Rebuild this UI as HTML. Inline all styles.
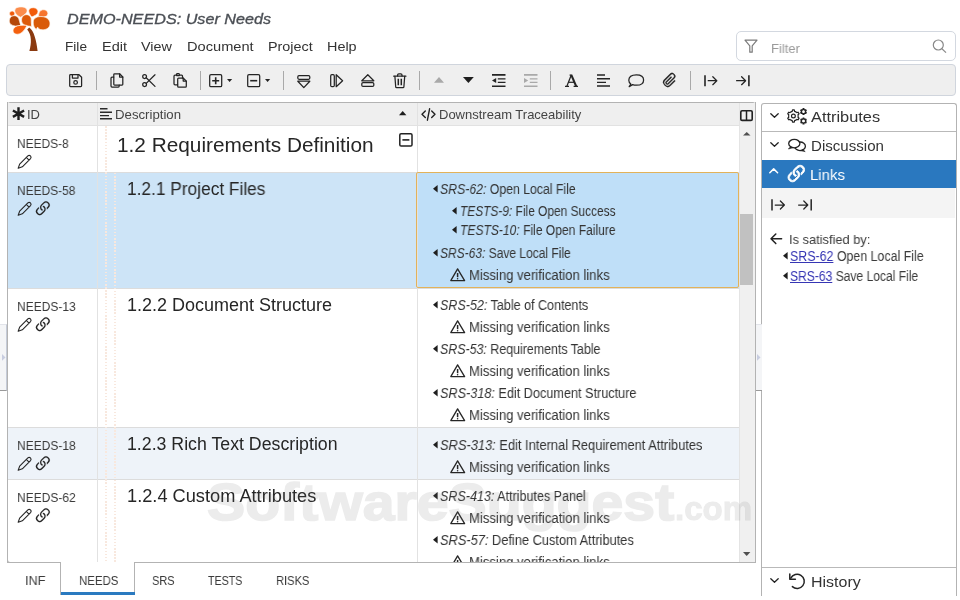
<!DOCTYPE html>
<html><head><meta charset="utf-8">
<style>
*{box-sizing:border-box;margin:0;padding:0}
html,body{width:960px;height:600px;overflow:hidden;background:#fff;font-family:"Liberation Sans",sans-serif;color:#333}
.a{position:absolute;white-space:nowrap}
[id^=t]{will-change:transform}
svg{position:absolute;overflow:visible}
i{font-style:italic}
</style></head><body>
<svg style="left:0px;top:0px" width="60" height="56" viewBox="0 0 60 56" >
 <path d="M29.2 27.5 C34 30.5 36.5 41 37.6 51 L29.4 51 C31.6 43 31.8 35 27.2 29.5 Z" fill="#8a3a10"/>
 <g stroke="#fff6ee" stroke-width="0.7">
 <circle cx="12.1" cy="13.6" r="2.6" fill="#f05a0a"/>
 <path d="M20.6 17.2 C17 15.5 14.6 13.2 14.8 10.4 C15 7.6 18 6.8 21.2 6.9 C24.6 7 27.2 8.2 27.1 10.8 C27 13.6 23.6 15.4 20.6 17.2 Z" fill="#fb8c4c"/>
 <path d="M31.8 17 C29.5 14.5 28.6 12.2 28.8 10.4 C29 8.4 31 7.6 33.4 7.7 C36.2 7.8 38.1 9.4 38 11.8 C37.9 14.4 34.6 15.8 31.8 17 Z" fill="#f25a08"/>
 <path d="M38.6 16.6 C38.4 13.2 39.6 10.2 42.8 9.7 C46 9.3 48 11.4 47.9 13.6 C47.8 16 45.4 17 43 16.9 C41.4 16.8 40 16.6 38.6 16.6 Z" fill="#f6752e"/>
 <path d="M20.8 25.6 C17.5 26.4 13.2 26.4 10.8 24.4 C8.6 22.4 9 18.2 11.4 16.6 C13.8 15 17.2 15.6 18.6 18.2 C19.6 20.2 19.8 23.2 20.8 25.6 Z" fill="#b54708"/>
 <path d="M31.6 26.4 C28 26.2 24 25.6 22.4 23.2 C20.8 20.8 21.4 16.4 24.6 15 C27.8 13.8 30.8 15.6 31.2 18.8 C31.5 21.2 31 23.8 31.6 26.4 Z" fill="#dd5a0a"/>
 <path d="M33.2 22 C33.4 17.6 37.6 16.3 42 16.6 C47 17 50.2 20 50 24 C49.8 28 46 30 42.2 29.8 C39.8 29.7 38.2 28.4 37.6 27.2 L36.2 29.4 C34 27.6 33.1 25 33.2 22 Z" fill="#d95a08"/>
 <path d="M27 25.4 C25 29.5 22 33.8 17.8 34.2 C14.2 34.5 12.6 32 13.2 29.6 C13.8 27 16.8 25.6 20.2 25.4 C22.6 25.3 24.8 25.3 27 25.4 Z" fill="#f4600e"/>
 </g>
</svg>
<div id="t0" class="a" style="left:67.00px;top:10px;font-size:15.5px;line-height:17px;color:#4b4f55;transform:scaleX(1.0440);transform-origin:0 0;font-style:italic;-webkit-text-stroke:0.35px #4b4f55">DEMO-NEEDS: User Needs</div>
<div id="t1" class="a" style="left:65.25px;top:39px;font-size:13px;line-height:15px;color:#333;transform:scaleX(1.0482);transform-origin:0 0;">File</div>
<div id="t2" class="a" style="left:101.50px;top:39px;font-size:13px;line-height:15px;color:#333;transform:scaleX(1.1134);transform-origin:0 0;">Edit</div>
<div id="t3" class="a" style="left:140.90px;top:39px;font-size:13px;line-height:15px;color:#333;transform:scaleX(1.1031);transform-origin:0 0;">View</div>
<div id="t4" class="a" style="left:186.70px;top:39px;font-size:13px;line-height:15px;color:#333;transform:scaleX(1.1251);transform-origin:0 0;">Document</div>
<div id="t5" class="a" style="left:268.00px;top:39px;font-size:13px;line-height:15px;color:#333;transform:scaleX(1.1055);transform-origin:0 0;">Project</div>
<div id="t6" class="a" style="left:327.30px;top:39px;font-size:13px;line-height:15px;color:#333;transform:scaleX(1.1081);transform-origin:0 0;">Help</div>
<div class="a" style="left:736px;top:31px;width:220px;height:30px;border:1px solid #d3d8e0;border-radius:5px;background:#fff"></div>
<svg style="left:744px;top:38.5px" width="14" height="14.5" viewBox="0 0 14 14.5" ><path d="M1 1.2 H13 L8.2 6.8 V13.2 H5.8 V6.8 Z" fill="none" stroke="#7a7a7a" stroke-width="1.2" stroke-linejoin="round"/></svg>
<div id="t7" class="a" style="left:771.00px;top:41px;font-size:13.5px;line-height:15px;color:#9a9a9a;transform:scaleX(0.9634);transform-origin:0 0;">Filter</div>
<svg style="left:932px;top:38.5px" width="16" height="16" viewBox="0 0 16 16" ><circle cx="6.3" cy="6" r="5" fill="none" stroke="#888" stroke-width="1.2"/><path d="M9.8 9.6 L14 13.6" stroke="#888" stroke-width="1.3"/></svg>
<div class="a" style="left:6px;top:64px;width:950px;height:32px;border:1px solid #d0d5dd;border-radius:4px;background:#efefef"></div>
<div class="a" style="left:96.0px;top:71px;width:1px;height:19px;background:#a9a9a9"></div>
<div class="a" style="left:199.6px;top:71px;width:1px;height:19px;background:#a9a9a9"></div>
<div class="a" style="left:283.0px;top:71px;width:1px;height:19px;background:#a9a9a9"></div>
<div class="a" style="left:419.0px;top:71px;width:1px;height:19px;background:#a9a9a9"></div>
<div class="a" style="left:550.1px;top:71px;width:1px;height:19px;background:#a9a9a9"></div>
<div class="a" style="left:690.1px;top:71px;width:1px;height:19px;background:#a9a9a9"></div>
<svg style="left:69px;top:74px" width="14" height="13.5" viewBox="0 0 14 13.5" ><path d="M1.6 0.7 H10 L12.6 3.3 V11.8 Q12.6 12.6 11.8 12.6 H1.6 Q0.7 12.6 0.7 11.8 V1.5 Q0.7 0.7 1.6 0.7 Z" fill="none" stroke="#242424" stroke-width="1.25" stroke-linejoin="round" stroke-linecap="round"/><path d="M3.4 0.8 V4 H9 V0.8" fill="none" stroke="#242424" stroke-width="1.25" stroke-linejoin="round" stroke-linecap="round"/><circle cx="6.6" cy="8.4" r="1.8" fill="none" stroke="#242424" stroke-width="1.25" stroke-linejoin="round" stroke-linecap="round"/></svg>
<svg style="left:109.5px;top:73px" width="14" height="15" viewBox="0 0 14 15" ><path d="M3.6 4.2 H2 Q1 4.2 1 5.2 V13 Q1 14 2 14 H8.2 Q9.2 14 9.2 13 V12.2" fill="none" stroke="#242424" stroke-width="1.25" stroke-linejoin="round" stroke-linecap="round"/><path d="M4.6 0.8 H9.6 L12.8 4 V11.2 Q12.8 12 12 12 H4.6 Q3.8 12 3.8 11.2 V1.6 Q3.8 0.8 4.6 0.8 Z" fill="none" stroke="#242424" stroke-width="1.25" stroke-linejoin="round" stroke-linecap="round"/><path d="M9.6 0.8 V4 H12.8" fill="none" stroke="#242424" stroke-width="1.25" stroke-linejoin="round" stroke-linecap="round"/></svg>
<svg style="left:141.5px;top:74px" width="14" height="13.5" viewBox="0 0 14 13.5" ><circle cx="2.6" cy="2.6" r="1.9" fill="none" stroke="#242424" stroke-width="1.25" stroke-linejoin="round" stroke-linecap="round"/><circle cx="2.6" cy="10.6" r="1.9" fill="none" stroke="#242424" stroke-width="1.25" stroke-linejoin="round" stroke-linecap="round"/><path d="M4.2 3.8 L13 12.4 M4.2 9.4 L13 0.8" fill="none" stroke="#242424" stroke-width="1.25" stroke-linejoin="round" stroke-linecap="round"/></svg>
<svg style="left:173px;top:73px" width="14.5" height="15" viewBox="0 0 14.5 15" ><path d="M6.5 2.2 H8.6 Q9.5 2.2 9.5 3.1 V5" fill="none" stroke="#242424" stroke-width="1.25" stroke-linejoin="round" stroke-linecap="round"/><path d="M4.2 2.2 H2 Q1 2.2 1 3.2 V10.8 Q1 11.8 2 11.8 H4.6" fill="none" stroke="#242424" stroke-width="1.25" stroke-linejoin="round" stroke-linecap="round"/><path d="M3.6 2.6 V1.4 Q3.6 0.7 4.3 0.7 H5.6 Q6.3 0.7 6.3 1.4 V2.6 Z" fill="none" stroke="#242424" stroke-width="1.25" stroke-linejoin="round" stroke-linecap="round"/><path d="M5.6 5 H10.2 L13.3 8.1 V13.3 Q13.3 14.2 12.4 14.2 H5.6 Q4.7 14.2 4.7 13.3 V5.9 Q4.7 5 5.6 5 Z" fill="none" stroke="#242424" stroke-width="1.25" stroke-linejoin="round" stroke-linecap="round"/><path d="M10.2 5 V8.1 H13.3" fill="none" stroke="#242424" stroke-width="1.25" stroke-linejoin="round" stroke-linecap="round"/></svg>
<svg style="left:209px;top:74px" width="13.5" height="13.5" viewBox="0 0 13.5 13.5" ><rect x="0.7" y="0.7" width="12" height="12" rx="1.3" fill="none" stroke="#242424" stroke-width="1.25" stroke-linejoin="round" stroke-linecap="round" stroke-width="1.4"/><path d="M6.7 3.2 V10.2 M3.2 6.7 H10.2" fill="none" stroke="#242424" stroke-width="1.6"/></svg>
<svg style="left:227.3px;top:78.8px" width="5.5" height="3.2" viewBox="0 0 5.5 3.2" ><path d="M0 0 H5.2 L2.6 3 Z" fill="#242424"/></svg>
<svg style="left:246.8px;top:74px" width="13.5" height="13.5" viewBox="0 0 13.5 13.5" ><rect x="0.7" y="0.7" width="12" height="12" rx="1.3" fill="none" stroke="#242424" stroke-width="1.25" stroke-linejoin="round" stroke-linecap="round" stroke-width="1.4"/><path d="M3.2 6.7 H10.2" fill="none" stroke="#242424" stroke-width="1.6"/></svg>
<svg style="left:264.5px;top:78.8px" width="5.5" height="3.2" viewBox="0 0 5.5 3.2" ><path d="M0 0 H5.2 L2.6 3 Z" fill="#242424"/></svg>
<svg style="left:296.8px;top:74.6px" width="13.8" height="13.5" viewBox="0 0 13.8 13.5" ><rect x="0.8" y="0.7" width="12" height="3.6" rx="1.2" fill="none" stroke="#242424" stroke-width="1.25" stroke-linejoin="round" stroke-linecap="round"/><path d="M0.8 6.2 H12.8 L6.8 12.6 Z" fill="none" stroke="#242424" stroke-width="1.25" stroke-linejoin="round" stroke-linecap="round"/></svg>
<svg style="left:329.8px;top:74.2px" width="13.5" height="13.5" viewBox="0 0 13.5 13.5" ><rect x="0.7" y="0.7" width="3.6" height="12" rx="1.2" fill="none" stroke="#242424" stroke-width="1.25" stroke-linejoin="round" stroke-linecap="round"/><path d="M6.2 0.7 V12.7 L12.6 6.7 Z" fill="none" stroke="#242424" stroke-width="1.25" stroke-linejoin="round" stroke-linecap="round"/></svg>
<svg style="left:360.6px;top:74px" width="14" height="13.5" viewBox="0 0 14 13.5" ><path d="M0.8 6.8 H12.8 L6.8 0.7 Z" fill="none" stroke="#242424" stroke-width="1.25" stroke-linejoin="round" stroke-linecap="round"/><rect x="0.8" y="8.6" width="12" height="3.8" rx="1.2" fill="none" stroke="#242424" stroke-width="1.25" stroke-linejoin="round" stroke-linecap="round"/></svg>
<svg style="left:392.6px;top:72.6px" width="14" height="15.5" viewBox="0 0 14 15.5" ><path d="M0.7 3.2 H12.9" fill="none" stroke="#242424" stroke-width="1.25" stroke-linejoin="round" stroke-linecap="round"/><path d="M4.6 3 V2 Q4.6 0.8 5.8 0.8 H7.8 Q9 0.8 9 2 V3" fill="none" stroke="#242424" stroke-width="1.25" stroke-linejoin="round" stroke-linecap="round" fill="#242424"/><path d="M1.9 3.4 L2.7 13.8 Q2.8 14.6 3.6 14.6 H10 Q10.8 14.6 10.9 13.8 L11.7 3.4" fill="none" stroke="#242424" stroke-width="1.25" stroke-linejoin="round" stroke-linecap="round"/><path d="M5.3 5.8 V12.2 M8.3 5.8 V12.2" fill="none" stroke="#242424" stroke-width="1.5"/></svg>
<svg style="left:433.5px;top:77px" width="10" height="5.8" viewBox="0 0 10 5.8" ><path d="M0 5.8 H10 L5 0 Z" fill="#a9a9a9"/></svg>
<svg style="left:462.7px;top:77.2px" width="10.8" height="6" viewBox="0 0 10.8 6" ><path d="M0 0 H10.8 L5.4 6 Z" fill="#1e1e1e"/></svg>
<svg style="left:492.2px;top:74px" width="13.5" height="13" viewBox="0 0 13.5 13" ><path d="M0 0.9 H13.5 M0 12.2 H13.5" fill="none" stroke="#242424" stroke-width="1.6"/><path d="M5.8 4.9 H13.5 M5.8 8.4 H13.5" fill="none" stroke="#242424" stroke-width="1.4"/><path d="M0 6.6 L4.2 4.1 V9.1 Z" fill="#242424"/></svg>
<svg style="left:524.4px;top:74px" width="13.5" height="13" viewBox="0 0 13.5 13" ><path d="M0 0.9 H13.5 M0 12.2 H13.5" fill="none" stroke="#a9a9a9" stroke-width="1.6"/><path d="M5.8 4.9 H13.5 M5.8 8.4 H13.5" fill="none" stroke="#a9a9a9" stroke-width="1.4"/><path d="M4.2 6.6 L0 4.1 V9.1 Z" fill="#a9a9a9"/></svg>
<svg style="left:565px;top:74px" width="13" height="13.2" viewBox="0 0 13 13.2" ><path d="M1.8 12.4 L6.3 0.9" fill="none" stroke="#242424" stroke-width="1.3"/><path d="M6.3 0.9 L11.2 12.4" fill="none" stroke="#242424" stroke-width="2.1"/><path d="M3.4 8.3 H9.4" fill="none" stroke="#242424" stroke-width="1.2"/><path d="M0 12.4 H4 M8.6 12.4 H13" fill="none" stroke="#242424" stroke-width="1.2"/><path d="M4.6 1.1 H6.8" stroke="#242424" stroke-width="1.3"/></svg>
<svg style="left:596.8px;top:74px" width="13" height="13" viewBox="0 0 13 13" ><path d="M0 1 H8 M0 4.7 H13 M0 8.4 H9 M0 12 H13" fill="none" stroke="#242424" stroke-width="1.4"/></svg>
<svg style="left:627.8px;top:74px" width="16.5" height="13.5" viewBox="0 0 16.5 13.5" ><path d="M2.8 10 Q0.8 8.4 0.8 6.2 Q0.8 0.8 8.4 0.8 Q15.6 0.8 15.6 6 Q15.6 11.2 8.4 11.2 Q6.2 11.2 4.6 10.6 L1.2 12.6 Z" fill="none" stroke="#242424" stroke-width="1.25" stroke-linejoin="round" stroke-linecap="round" stroke-width="1.3"/></svg>
<svg style="left:661.8px;top:72.2px" width="15.8" height="16.4" viewBox="0 0 16 16" ><g transform="rotate(45 8 8) translate(8 8) scale(1.28 1.0) translate(-8 -8)"><path d="M4.5 3a2.5 2.5 0 0 1 5 0v9a1.5 1.5 0 0 1-3 0V5a.5.5 0 0 1 1 0v7a.5.5 0 0 0 1 0V3a1.5 1.5 0 1 0-3 0v9a2.5 2.5 0 0 0 5 0V5a.5.5 0 0 1 1 0v7a3.5 3.5 0 1 1-7 0V3z" fill="#242424" stroke="#242424" stroke-width="0.25"/></g></svg>
<svg style="left:703.8px;top:75px" width="14" height="11.5" viewBox="0 0 14 11.5" ><path d="M1 0.3 V11.2" fill="none" stroke="#242424" stroke-width="1.6"/><path d="M4.2 5.7 H12.8 M8.8 1.7 L12.8 5.7 L8.8 9.7" fill="none" stroke="#242424" stroke-width="1.25" stroke-linejoin="round" stroke-linecap="round" stroke-width="1.4"/></svg>
<svg style="left:736px;top:75px" width="14.5" height="11.5" viewBox="0 0 14.5 11.5" ><path d="M12.9 0.3 V11.2" fill="none" stroke="#242424" stroke-width="1.6"/><path d="M0.6 5.7 H9.6 M5.6 1.7 L9.6 5.7 L5.6 9.7" fill="none" stroke="#242424" stroke-width="1.25" stroke-linejoin="round" stroke-linecap="round" stroke-width="1.4"/></svg>
<div class="a" style="left:7px;top:102px;width:749px;height:461px;border:1px solid #b3b3b3;border-radius:3px;background:#fff"></div>
<div class="a" style="left:8px;top:103px;width:730.5px;height:21.5px;background:#efefef"></div>
<div class="a" style="left:8px;top:124.5px;width:730.5px;height:1px;background:#e2e2e2"></div>
<div class="a" style="left:8px;top:172px;width:409px;height:116px;background:#cde4f7"></div>
<div class="a" style="left:417px;top:172px;width:321.5px;height:116px;background:#bfdff8"></div>
<div class="a" style="left:8px;top:427.5px;width:730.5px;height:52px;background:#eef3f9"></div>
<div class="a" style="left:8px;top:171.5px;width:730.5px;height:1px;background:#dcdcdc"></div>
<div class="a" style="left:8px;top:287.5px;width:730.5px;height:1px;background:#dcdcdc"></div>
<div class="a" style="left:8px;top:427.3px;width:730.5px;height:1px;background:#dcdcdc"></div>
<div class="a" style="left:8px;top:479.2px;width:730.5px;height:1px;background:#dcdcdc"></div>
<div class="a" style="left:97px;top:103px;width:1px;height:459px;background:#e2e2e2"></div>
<div class="a" style="left:417px;top:103px;width:1px;height:459px;background:#e2e2e2"></div>
<div class="a" style="left:416.3px;top:171.6px;width:322.3px;height:116.6px;border:1.5px solid #e2b25a;border-radius:2px"></div>
<div class="a" style="left:105px;top:126px;width:1.6px;height:436px;background:repeating-linear-gradient(to bottom,#f8e8de 0 1.5px,transparent 1.5px 3.1px)"></div>
<div class="a" style="left:114px;top:173px;width:1.6px;height:389px;background:repeating-linear-gradient(to bottom,#f8e8de 0 1.5px,transparent 1.5px 3.1px)"></div>
<div class="a" style="left:738.5px;top:103px;width:17px;height:459px;background:#f0f0f0;border-left:1px solid #e4e4e4"></div>
<div class="a" style="left:740.3px;top:213.8px;width:12.8px;height:70.8px;background:#c1c1c1"></div>
<svg style="left:742.9px;top:132.2px" width="7.5" height="3.6" viewBox="0 0 7.5 3.6" ><path d="M0 3.6 H7.5 L3.75 0 Z" fill="#505050"/></svg>
<svg style="left:743px;top:552px" width="7.4" height="4" viewBox="0 0 7.4 4" ><path d="M0 0 H7.4 L3.7 4 Z" fill="#505050"/></svg>
<svg style="left:11.5px;top:107.3px" width="13" height="13.4" viewBox="0 0 13 13.4" ><path d="M6.5 0.3 V13.1 M0.9 3.5 L12.1 9.9 M0.9 9.9 L12.1 3.5" fill="none" stroke="#1e1e1e" stroke-width="2.4"/></svg>
<div id="t8" class="a" style="left:27.40px;top:107px;font-size:13px;line-height:15px;color:#444;transform:scaleX(0.9915);transform-origin:0 0;">ID</div>
<svg style="left:100px;top:108.3px" width="12.5" height="11.5" viewBox="0 0 12.5 11.5" ><path d="M0 0.8 H7.5 M0 4.2 H12 M0 7.6 H9 M0 10.8 H12" fill="none" stroke="#2a2a2a" stroke-width="1.4"/></svg>
<div id="t9" class="a" style="left:115.25px;top:107px;font-size:13px;line-height:15px;color:#444;transform:scaleX(1.0160);transform-origin:0 0;">Description</div>
<svg style="left:398.7px;top:110.5px" width="7.4" height="4.3" viewBox="0 0 7.4 4.3" ><path d="M0 4.3 H7.4 L3.7 0 Z" fill="#1e1e1e"/></svg>
<svg style="left:420.5px;top:108px" width="15" height="13" viewBox="0 0 15 13" ><path d="M4.3 3 L1 6.2 L4.3 9.4 M10.7 3 L14 6.2 L10.7 9.4 M8.6 0.8 L6.4 12.2" fill="none" stroke="#222" stroke-width="1.4" stroke-linecap="round" stroke-linejoin="round"/></svg>
<div id="t10" class="a" style="left:438.75px;top:107px;font-size:13px;line-height:15px;color:#444;transform:scaleX(0.9970);transform-origin:0 0;">Downstream Traceability</div>
<svg style="left:740.2px;top:109.6px" width="13" height="11.2" viewBox="0 0 13 11.2" ><rect x="0.8" y="0.8" width="11.4" height="9.6" rx="1.2" fill="none" stroke="#222" stroke-width="1.6"/><path d="M6.5 1 V10.2" stroke="#222" stroke-width="1.5"/></svg>
<div id="t11" class="a" style="left:17.40px;top:136px;font-size:13.5px;line-height:15px;color:#3a3a3a;transform:scaleX(0.8834);transform-origin:0 0;">NEEDS-8</div>
<svg style="left:17.2px;top:155.2px" width="14" height="14" viewBox="0 0 14 14" ><path d="M1.2 13.3 L2.66 9.16 L10.86 0.86 A1.9 1.9 0 0 1 13.54 3.54 L5.34 11.84 Z M9.3 2.42 L11.98 5.1" fill="none" stroke="#262626" stroke-width="1.1" stroke-linejoin="round"/></svg>
<div id="t12" class="a" style="left:117.00px;top:134px;font-size:20px;line-height:22px;color:#262626;transform:scaleX(1.0396);transform-origin:0 0;">1.2 Requirements Definition</div>
<div id="t13" class="a" style="left:17.40px;top:183px;font-size:13.5px;line-height:15px;color:#3a3a3a;transform:scaleX(0.8843);transform-origin:0 0;">NEEDS-58</div>
<svg style="left:17.2px;top:202.2px" width="14" height="14" viewBox="0 0 14 14" ><path d="M1.2 13.3 L2.66 9.16 L10.86 0.86 A1.9 1.9 0 0 1 13.54 3.54 L5.34 11.84 Z M9.3 2.42 L11.98 5.1" fill="none" stroke="#262626" stroke-width="1.1" stroke-linejoin="round"/></svg>
<svg style="left:35.8px;top:202.2px" width="13.7" height="13.7" viewBox="2.46 2.46 11.08 11.08" ><g fill="#262626" stroke="#262626" stroke-width="0.12"><path d="M4.715 6.542 3.343 7.914a3 3 0 1 0 4.243 4.243l1.828-1.829A3 3 0 0 0 8.586 5.5L8 6.086a1.002 1.002 0 0 0-.154.199 2 2 0 0 1 .861 3.337L6.88 11.45a2 2 0 1 1-2.83-2.83l.793-.792a4.018 4.018 0 0 1-.128-1.287z"/><path d="M6.586 4.672A3 3 0 0 0 7.414 9.5l.775-.776a2 2 0 0 1-.896-3.346L9.12 3.55a2 2 0 1 1 2.83 2.83l-.793.792c.112.42.155.855.128 1.287l1.372-1.372a3 3 0 1 0-4.243-4.243L6.586 4.672z"/></g></svg>
<div id="t14" class="a" style="left:126.50px;top:179px;font-size:17.5px;line-height:20px;color:#262626;transform:scaleX(0.9883);transform-origin:0 0;">1.2.1 Project Files</div>
<div id="t15" class="a" style="left:17.40px;top:299px;font-size:13.5px;line-height:15px;color:#3a3a3a;transform:scaleX(0.8890);transform-origin:0 0;">NEEDS-13</div>
<svg style="left:17.2px;top:318.2px" width="14" height="14" viewBox="0 0 14 14" ><path d="M1.2 13.3 L2.66 9.16 L10.86 0.86 A1.9 1.9 0 0 1 13.54 3.54 L5.34 11.84 Z M9.3 2.42 L11.98 5.1" fill="none" stroke="#262626" stroke-width="1.1" stroke-linejoin="round"/></svg>
<svg style="left:35.8px;top:318.2px" width="13.7" height="13.7" viewBox="2.46 2.46 11.08 11.08" ><g fill="#262626" stroke="#262626" stroke-width="0.12"><path d="M4.715 6.542 3.343 7.914a3 3 0 1 0 4.243 4.243l1.828-1.829A3 3 0 0 0 8.586 5.5L8 6.086a1.002 1.002 0 0 0-.154.199 2 2 0 0 1 .861 3.337L6.88 11.45a2 2 0 1 1-2.83-2.83l.793-.792a4.018 4.018 0 0 1-.128-1.287z"/><path d="M6.586 4.672A3 3 0 0 0 7.414 9.5l.775-.776a2 2 0 0 1-.896-3.346L9.12 3.55a2 2 0 1 1 2.83 2.83l-.793.792c.112.42.155.855.128 1.287l1.372-1.372a3 3 0 1 0-4.243-4.243L6.586 4.672z"/></g></svg>
<div id="t16" class="a" style="left:126.50px;top:295px;font-size:17.5px;line-height:20px;color:#262626;transform:scaleX(1.0286);transform-origin:0 0;">1.2.2 Document Structure</div>
<div id="t17" class="a" style="left:17.40px;top:438px;font-size:13.5px;line-height:15px;color:#3a3a3a;transform:scaleX(0.8890);transform-origin:0 0;">NEEDS-18</div>
<svg style="left:17.2px;top:457.2px" width="14" height="14" viewBox="0 0 14 14" ><path d="M1.2 13.3 L2.66 9.16 L10.86 0.86 A1.9 1.9 0 0 1 13.54 3.54 L5.34 11.84 Z M9.3 2.42 L11.98 5.1" fill="none" stroke="#262626" stroke-width="1.1" stroke-linejoin="round"/></svg>
<svg style="left:35.8px;top:457.2px" width="13.7" height="13.7" viewBox="2.46 2.46 11.08 11.08" ><g fill="#262626" stroke="#262626" stroke-width="0.12"><path d="M4.715 6.542 3.343 7.914a3 3 0 1 0 4.243 4.243l1.828-1.829A3 3 0 0 0 8.586 5.5L8 6.086a1.002 1.002 0 0 0-.154.199 2 2 0 0 1 .861 3.337L6.88 11.45a2 2 0 1 1-2.83-2.83l.793-.792a4.018 4.018 0 0 1-.128-1.287z"/><path d="M6.586 4.672A3 3 0 0 0 7.414 9.5l.775-.776a2 2 0 0 1-.896-3.346L9.12 3.55a2 2 0 1 1 2.83 2.83l-.793.792c.112.42.155.855.128 1.287l1.372-1.372a3 3 0 1 0-4.243-4.243L6.586 4.672z"/></g></svg>
<div id="t18" class="a" style="left:126.50px;top:434px;font-size:17.5px;line-height:20px;color:#262626;transform:scaleX(1.0131);transform-origin:0 0;">1.2.3 Rich Text Description</div>
<div id="t19" class="a" style="left:17.40px;top:490px;font-size:13.5px;line-height:15px;color:#3a3a3a;transform:scaleX(0.8890);transform-origin:0 0;">NEEDS-62</div>
<svg style="left:17.2px;top:509.2px" width="14" height="14" viewBox="0 0 14 14" ><path d="M1.2 13.3 L2.66 9.16 L10.86 0.86 A1.9 1.9 0 0 1 13.54 3.54 L5.34 11.84 Z M9.3 2.42 L11.98 5.1" fill="none" stroke="#262626" stroke-width="1.1" stroke-linejoin="round"/></svg>
<svg style="left:35.8px;top:509.2px" width="13.7" height="13.7" viewBox="2.46 2.46 11.08 11.08" ><g fill="#262626" stroke="#262626" stroke-width="0.12"><path d="M4.715 6.542 3.343 7.914a3 3 0 1 0 4.243 4.243l1.828-1.829A3 3 0 0 0 8.586 5.5L8 6.086a1.002 1.002 0 0 0-.154.199 2 2 0 0 1 .861 3.337L6.88 11.45a2 2 0 1 1-2.83-2.83l.793-.792a4.018 4.018 0 0 1-.128-1.287z"/><path d="M6.586 4.672A3 3 0 0 0 7.414 9.5l.775-.776a2 2 0 0 1-.896-3.346L9.12 3.55a2 2 0 1 1 2.83 2.83l-.793.792c.112.42.155.855.128 1.287l1.372-1.372a3 3 0 1 0-4.243-4.243L6.586 4.672z"/></g></svg>
<div id="t20" class="a" style="left:126.50px;top:486px;font-size:17.5px;line-height:20px;color:#262626;transform:scaleX(1.0408);transform-origin:0 0;">1.2.4 Custom Attributes</div>
<svg style="left:398.6px;top:132.6px" width="14" height="14" viewBox="0 0 14 14" ><rect x="0.8" y="0.8" width="12.2" height="12.2" rx="1.3" fill="none" stroke="#222" stroke-width="1.5"/><path d="M3.4 6.9 H10.4" stroke="#222" stroke-width="1.6"/></svg>
<svg style="left:432.8px;top:184.7px" width="4.8" height="7.6" viewBox="0 0 4.8 7.6" ><path d="M4.6 0 V7.6 L0 3.8 Z" fill="#1e1e1e"/></svg>
<div id="t21" class="a" style="left:440.00px;top:181px;font-size:14px;line-height:16px;color:#333;transform:scaleX(0.8764);transform-origin:0 0;"><i>SRS-62:</i> Open Local File</div>
<svg style="left:451.6px;top:206.7px" width="4.8" height="7.6" viewBox="0 0 4.8 7.6" ><path d="M4.6 0 V7.6 L0 3.8 Z" fill="#1e1e1e"/></svg>
<div id="t22" class="a" style="left:459.50px;top:203px;font-size:14px;line-height:16px;color:#333;transform:scaleX(0.8509);transform-origin:0 0;"><i>TESTS-9:</i> File Open Success</div>
<svg style="left:451.6px;top:225.7px" width="4.8" height="7.6" viewBox="0 0 4.8 7.6" ><path d="M4.6 0 V7.6 L0 3.8 Z" fill="#1e1e1e"/></svg>
<div id="t23" class="a" style="left:459.50px;top:222px;font-size:14px;line-height:16px;color:#333;transform:scaleX(0.8619);transform-origin:0 0;"><i>TESTS-10:</i> File Open Failure</div>
<svg style="left:432.8px;top:248.7px" width="4.8" height="7.6" viewBox="0 0 4.8 7.6" ><path d="M4.6 0 V7.6 L0 3.8 Z" fill="#1e1e1e"/></svg>
<div id="t24" class="a" style="left:440.00px;top:245px;font-size:14px;line-height:16px;color:#333;transform:scaleX(0.8569);transform-origin:0 0;"><i>SRS-63:</i> Save Local File</div>
<svg style="left:450.4px;top:267.8px" width="15.5" height="13.5" viewBox="0 0 15.5 13.5" ><path d="M7.6 0.9 L14.6 12.6 H0.8 Z" fill="none" stroke="#262626" stroke-width="1.3" stroke-linejoin="round"/><path d="M7.6 5 V9.2" stroke="#262626" stroke-width="1.5"/><circle cx="7.6" cy="10.8" r="0.8" fill="#262626"/></svg>
<div id="t25" class="a" style="left:469.20px;top:267px;font-size:14px;line-height:16px;color:#333;transform:scaleX(0.9363);transform-origin:0 0;">Missing verification links</div>
<svg style="left:432.8px;top:300.7px" width="4.8" height="7.6" viewBox="0 0 4.8 7.6" ><path d="M4.6 0 V7.6 L0 3.8 Z" fill="#1e1e1e"/></svg>
<div id="t26" class="a" style="left:440.00px;top:297px;font-size:14px;line-height:16px;color:#333;transform:scaleX(0.8950);transform-origin:0 0;"><i>SRS-52:</i> Table of Contents</div>
<svg style="left:450.4px;top:319.8px" width="15.5" height="13.5" viewBox="0 0 15.5 13.5" ><path d="M7.6 0.9 L14.6 12.6 H0.8 Z" fill="none" stroke="#262626" stroke-width="1.3" stroke-linejoin="round"/><path d="M7.6 5 V9.2" stroke="#262626" stroke-width="1.5"/><circle cx="7.6" cy="10.8" r="0.8" fill="#262626"/></svg>
<div id="t27" class="a" style="left:469.20px;top:319px;font-size:14px;line-height:16px;color:#333;transform:scaleX(0.9363);transform-origin:0 0;">Missing verification links</div>
<svg style="left:432.8px;top:344.7px" width="4.8" height="7.6" viewBox="0 0 4.8 7.6" ><path d="M4.6 0 V7.6 L0 3.8 Z" fill="#1e1e1e"/></svg>
<div id="t28" class="a" style="left:440.00px;top:341px;font-size:14px;line-height:16px;color:#333;transform:scaleX(0.8860);transform-origin:0 0;"><i>SRS-53:</i> Requirements Table</div>
<svg style="left:450.4px;top:363.8px" width="15.5" height="13.5" viewBox="0 0 15.5 13.5" ><path d="M7.6 0.9 L14.6 12.6 H0.8 Z" fill="none" stroke="#262626" stroke-width="1.3" stroke-linejoin="round"/><path d="M7.6 5 V9.2" stroke="#262626" stroke-width="1.5"/><circle cx="7.6" cy="10.8" r="0.8" fill="#262626"/></svg>
<div id="t29" class="a" style="left:469.20px;top:363px;font-size:14px;line-height:16px;color:#333;transform:scaleX(0.9363);transform-origin:0 0;">Missing verification links</div>
<svg style="left:432.8px;top:388.7px" width="4.8" height="7.6" viewBox="0 0 4.8 7.6" ><path d="M4.6 0 V7.6 L0 3.8 Z" fill="#1e1e1e"/></svg>
<div id="t30" class="a" style="left:440.00px;top:385px;font-size:14px;line-height:16px;color:#333;transform:scaleX(0.9049);transform-origin:0 0;"><i>SRS-318:</i> Edit Document Structure</div>
<svg style="left:450.4px;top:407.8px" width="15.5" height="13.5" viewBox="0 0 15.5 13.5" ><path d="M7.6 0.9 L14.6 12.6 H0.8 Z" fill="none" stroke="#262626" stroke-width="1.3" stroke-linejoin="round"/><path d="M7.6 5 V9.2" stroke="#262626" stroke-width="1.5"/><circle cx="7.6" cy="10.8" r="0.8" fill="#262626"/></svg>
<div id="t31" class="a" style="left:469.20px;top:407px;font-size:14px;line-height:16px;color:#333;transform:scaleX(0.9363);transform-origin:0 0;">Missing verification links</div>
<svg style="left:432.8px;top:440.7px" width="4.8" height="7.6" viewBox="0 0 4.8 7.6" ><path d="M4.6 0 V7.6 L0 3.8 Z" fill="#1e1e1e"/></svg>
<div id="t32" class="a" style="left:440.00px;top:437px;font-size:14px;line-height:16px;color:#333;transform:scaleX(0.9190);transform-origin:0 0;"><i>SRS-313:</i> Edit Internal Requirement Attributes</div>
<svg style="left:450.4px;top:459.8px" width="15.5" height="13.5" viewBox="0 0 15.5 13.5" ><path d="M7.6 0.9 L14.6 12.6 H0.8 Z" fill="none" stroke="#262626" stroke-width="1.3" stroke-linejoin="round"/><path d="M7.6 5 V9.2" stroke="#262626" stroke-width="1.5"/><circle cx="7.6" cy="10.8" r="0.8" fill="#262626"/></svg>
<div id="t33" class="a" style="left:469.20px;top:459px;font-size:14px;line-height:16px;color:#333;transform:scaleX(0.9363);transform-origin:0 0;">Missing verification links</div>
<svg style="left:432.8px;top:491.7px" width="4.8" height="7.6" viewBox="0 0 4.8 7.6" ><path d="M4.6 0 V7.6 L0 3.8 Z" fill="#1e1e1e"/></svg>
<div id="t34" class="a" style="left:440.00px;top:488px;font-size:14px;line-height:16px;color:#333;transform:scaleX(0.8961);transform-origin:0 0;"><i>SRS-413:</i> Attributes Panel</div>
<svg style="left:450.4px;top:510.8px" width="15.5" height="13.5" viewBox="0 0 15.5 13.5" ><path d="M7.6 0.9 L14.6 12.6 H0.8 Z" fill="none" stroke="#262626" stroke-width="1.3" stroke-linejoin="round"/><path d="M7.6 5 V9.2" stroke="#262626" stroke-width="1.5"/><circle cx="7.6" cy="10.8" r="0.8" fill="#262626"/></svg>
<div id="t35" class="a" style="left:469.20px;top:510px;font-size:14px;line-height:16px;color:#333;transform:scaleX(0.9363);transform-origin:0 0;">Missing verification links</div>
<svg style="left:432.8px;top:535.7px" width="4.8" height="7.6" viewBox="0 0 4.8 7.6" ><path d="M4.6 0 V7.6 L0 3.8 Z" fill="#1e1e1e"/></svg>
<div id="t36" class="a" style="left:440.00px;top:532px;font-size:14px;line-height:16px;color:#333;transform:scaleX(0.9155);transform-origin:0 0;"><i>SRS-57:</i> Define Custom Attributes</div>
<svg style="left:450.4px;top:554.8px" width="15.5" height="13.5" viewBox="0 0 15.5 13.5" ><path d="M7.6 0.9 L14.6 12.6 H0.8 Z" fill="none" stroke="#262626" stroke-width="1.3" stroke-linejoin="round"/><path d="M7.6 5 V9.2" stroke="#262626" stroke-width="1.5"/><circle cx="7.6" cy="10.8" r="0.8" fill="#262626"/></svg>
<div id="t37" class="a" style="left:469.20px;top:554px;font-size:14px;line-height:16px;color:#333;transform:scaleX(0.9363);transform-origin:0 0;">Missing verification links</div>
<div class="a" style="left:0;top:0;width:960px;height:600px;opacity:0.135"><div class="a" style="left:206.5px;top:472px;font-size:52px;line-height:60px;font-weight:bold;color:#707070;-webkit-text-stroke:1.6px #707070;transform:scaleX(1.10);transform-origin:0 0">SoftwareSuggest</div><div class="a" style="left:675px;top:490px;font-size:33px;line-height:37px;font-weight:bold;color:#707070;-webkit-text-stroke:1px #707070;transform:scaleX(1.0);transform-origin:0 0">.com</div></div>
<div class="a" style="left:0px;top:563px;width:758px;height:37px;background:#fff"></div>
<div class="a" style="left:7px;top:562px;width:749px;height:1px;background:#b3b3b3"></div>
<div class="a" style="left:7px;top:102px;width:1px;height:461px;background:#b3b3b3"></div>
<div class="a" style="left:755px;top:102px;width:1px;height:461px;background:#b3b3b3"></div>
<div class="a" style="left:60.5px;top:562px;width:74px;height:1px;background:#fff"></div>
<div class="a" style="left:60.3px;top:562px;width:1px;height:33px;background:#b3b3b3"></div>
<div class="a" style="left:133.8px;top:562px;width:1px;height:33px;background:#b3b3b3"></div>
<div class="a" style="left:60.5px;top:592px;width:74px;height:2.8px;background:#2a7ac0"></div>
<div id="t38" class="a" style="left:24.80px;top:573px;font-size:13.5px;line-height:15px;color:#3a3a3a;transform:scaleX(0.9412);transform-origin:0 0;">INF</div>
<div id="t39" class="a" style="left:79.00px;top:573px;font-size:13.5px;line-height:15px;color:#3a3a3a;transform:scaleX(0.8480);transform-origin:0 0;">NEEDS</div>
<div id="t40" class="a" style="left:152.30px;top:573px;font-size:13.5px;line-height:15px;color:#3a3a3a;transform:scaleX(0.8139);transform-origin:0 0;">SRS</div>
<div id="t41" class="a" style="left:208.20px;top:573px;font-size:13.5px;line-height:15px;color:#3a3a3a;transform:scaleX(0.7897);transform-origin:0 0;">TESTS</div>
<div id="t42" class="a" style="left:275.90px;top:573px;font-size:13.5px;line-height:15px;color:#3a3a3a;transform:scaleX(0.8247);transform-origin:0 0;">RISKS</div>
<div class="a" style="left:761px;top:102.5px;width:195.5px;height:493px;border:1px solid #b3b3b3;border-bottom:none;border-radius:3px 3px 0 0;background:#fff"></div>
<div class="a" style="left:762px;top:130.6px;width:194px;height:1px;background:#b9b9b9"></div>
<div class="a" style="left:762px;top:159.8px;width:194px;height:28px;background:#2a78bf"></div>
<div class="a" style="left:762px;top:187.8px;width:193px;height:30px;background:#f4f4f4"></div>
<div class="a" style="left:762px;top:567.2px;width:194px;height:1px;background:#b9b9b9"></div>
<svg style="left:770.2px;top:112.6px" width="9" height="5" viewBox="0 0 9 5" ><path d="M0.8 0.8 L4.5 4.2 L8.2 0.8" fill="none" stroke="#222" stroke-width="1.3" stroke-linecap="round" stroke-linejoin="round"/></svg>
<svg style="left:770.2px;top:142px" width="9" height="5" viewBox="0 0 9 5" ><path d="M0.8 0.8 L4.5 4.2 L8.2 0.8" fill="none" stroke="#222" stroke-width="1.3" stroke-linecap="round" stroke-linejoin="round"/></svg>
<svg style="left:770.2px;top:577.8px" width="9" height="5" viewBox="0 0 9 5" ><path d="M0.8 0.8 L4.5 4.2 L8.2 0.8" fill="none" stroke="#222" stroke-width="1.3" stroke-linecap="round" stroke-linejoin="round"/></svg>
<svg style="left:769px;top:168.4px" width="9.5" height="5.5" viewBox="0 0 9.5 5.5" ><path d="M0.8 4.7 L4.7 0.9 L8.6 4.7" fill="none" stroke="#fff" stroke-width="1.5" stroke-linecap="round" stroke-linejoin="round"/></svg>
<svg style="left:786px;top:108px" width="22" height="16" viewBox="0 0 22 16" >
<path d="M5.00 3.84 L6.21 3.35 L6.51 1.97 L8.29 1.97 L8.59 3.35 L9.80 3.84 L10.83 4.64 L12.18 4.21 L13.07 5.75 L12.02 6.71 L12.20 8.00 L12.02 9.29 L13.07 10.25 L12.18 11.79 L10.83 11.36 L9.80 12.16 L8.59 12.65 L8.29 14.03 L6.51 14.03 L6.21 12.65 L5.00 12.16 L3.97 11.36 L2.62 11.79 L1.73 10.25 L2.78 9.29 L2.60 8.00 L2.78 6.71 L1.73 5.75 L2.62 4.21 L3.97 4.64 Z" fill="none" stroke="#222" stroke-width="1.2" stroke-linejoin="round"/>
<circle cx="7.4" cy="8" r="1.9" fill="none" stroke="#222" stroke-width="1.2"/>
<path d="M16.50 1.87 L16.94 1.68 L17.05 0.74 L17.95 0.74 L18.06 1.68 L18.50 1.87 L18.88 2.16 L19.75 1.77 L20.21 2.56 L19.44 3.12 L19.50 3.60 L19.44 4.08 L20.21 4.64 L19.75 5.43 L18.88 5.04 L18.50 5.33 L18.06 5.52 L17.95 6.46 L17.05 6.46 L16.94 5.52 L16.50 5.33 L16.12 5.04 L15.25 5.43 L14.79 4.64 L15.56 4.08 L15.50 3.60 L15.56 3.12 L14.79 2.56 L15.25 1.77 L16.12 2.16 Z" fill="none" stroke="#222" stroke-width="1.3" stroke-linejoin="round"/>
<path d="M16.50 11.27 L16.94 11.08 L17.05 10.14 L17.95 10.14 L18.06 11.08 L18.50 11.27 L18.88 11.56 L19.75 11.17 L20.21 11.96 L19.44 12.52 L19.50 13.00 L19.44 13.48 L20.21 14.04 L19.75 14.83 L18.88 14.44 L18.50 14.73 L18.06 14.92 L17.95 15.86 L17.05 15.86 L16.94 14.92 L16.50 14.73 L16.12 14.44 L15.25 14.83 L14.79 14.04 L15.56 13.48 L15.50 13.00 L15.56 12.52 L14.79 11.96 L15.25 11.17 L16.12 11.56 Z" fill="none" stroke="#222" stroke-width="1.3" stroke-linejoin="round"/>
</svg>
<div id="t43" class="a" style="left:810.80px;top:108px;font-size:15px;line-height:17px;color:#333;transform:scaleX(1.0909);transform-origin:0 0;">Attributes</div>
<svg style="left:787px;top:137px" width="20" height="16" viewBox="0 0 20 16" >
<ellipse cx="13" cy="9.3" rx="5.4" ry="4.3" fill="#fff" stroke="#222" stroke-width="1.3"/>
<path d="M15.8 12.6 L18.2 14.6 L13.8 13.8 Z" fill="#222" stroke="#222" stroke-width="0.6" stroke-linejoin="round"/>
<ellipse cx="7.3" cy="6.6" rx="5.6" ry="4.2" fill="#fff" stroke="#222" stroke-width="1.3"/>
<path d="M3.4 9.8 L1.4 12 L5.8 10.8 Z" fill="#222" stroke="#222" stroke-width="0.6" stroke-linejoin="round"/>
</svg>
<div id="t44" class="a" style="left:810.80px;top:137px;font-size:15px;line-height:17px;color:#333;transform:scaleX(1.0052);transform-origin:0 0;">Discussion</div>
<svg style="left:787.8px;top:165.6px" width="16.6" height="16.6" viewBox="2.46 2.46 11.08 11.08" ><g fill="#fff" stroke="#fff" stroke-width="0.6"><path d="M4.715 6.542 3.343 7.914a3 3 0 1 0 4.243 4.243l1.828-1.829A3 3 0 0 0 8.586 5.5L8 6.086a1.002 1.002 0 0 0-.154.199 2 2 0 0 1 .861 3.337L6.88 11.45a2 2 0 1 1-2.83-2.83l.793-.792a4.018 4.018 0 0 1-.128-1.287z"/><path d="M6.586 4.672A3 3 0 0 0 7.414 9.5l.775-.776a2 2 0 0 1-.896-3.346L9.12 3.55a2 2 0 1 1 2.83 2.83l-.793.792c.112.42.155.855.128 1.287l1.372-1.372a3 3 0 1 0-4.243-4.243L6.586 4.672z"/></g></svg>
<div id="t45" class="a" style="left:810.00px;top:166px;font-size:15.5px;line-height:17px;color:#fff;transform:scaleX(0.9643);transform-origin:0 0;">Links</div>
<svg style="left:770.5px;top:198.5px" width="14.5" height="12" viewBox="0 0 14.5 12" ><path d="M1 0.3 V11.6" fill="none" stroke="#242424" stroke-width="1.5"/><path d="M4.2 6 H13.4 M9.4 2 L13.4 6 L9.4 10" fill="none" stroke="#242424" stroke-width="1.25" stroke-linejoin="round" stroke-linecap="round" stroke-width="1.35"/></svg>
<svg style="left:797.8px;top:198.5px" width="14.5" height="12" viewBox="0 0 14.5 12" ><path d="M13.2 0.3 V11.6" fill="none" stroke="#242424" stroke-width="1.5"/><path d="M0.6 6 H9.8 M5.8 2 L9.8 6 L5.8 10" fill="none" stroke="#242424" stroke-width="1.25" stroke-linejoin="round" stroke-linecap="round" stroke-width="1.35"/></svg>
<svg style="left:770.4px;top:232.8px" width="12.5" height="11.6" viewBox="0 0 12.5 11.6" ><path d="M11.6 5.8 H1.2 M5.8 1 L1 5.8 L5.8 10.6" fill="none" stroke="#222" stroke-width="1.5" stroke-linecap="round" stroke-linejoin="round"/></svg>
<div id="t46" class="a" style="left:788.60px;top:232px;font-size:13.5px;line-height:15px;color:#3a3a3a;transform:scaleX(0.9513);transform-origin:0 0;">Is satisfied by:</div>
<svg style="left:782.6px;top:252.2px" width="4.8" height="7.6" viewBox="0 0 4.8 7.6" ><path d="M4.6 0 V7.6 L0 3.8 Z" fill="#1e1e1e"/></svg>
<div id="t47" class="a" style="left:790.10px;top:248px;font-size:14px;line-height:16px;color:#3a3a3a;transform:scaleX(0.8851);transform-origin:0 0;"><span style="color:#3636b4;text-decoration:underline">SRS-62</span> Open Local File</div>
<svg style="left:782.6px;top:272.2px" width="4.8" height="7.6" viewBox="0 0 4.8 7.6" ><path d="M4.6 0 V7.6 L0 3.8 Z" fill="#1e1e1e"/></svg>
<div id="t48" class="a" style="left:790.10px;top:268px;font-size:14px;line-height:16px;color:#3a3a3a;transform:scaleX(0.8625);transform-origin:0 0;"><span style="color:#3636b4;text-decoration:underline">SRS-63</span> Save Local File</div>
<svg style="left:785px;top:570px" width="24" height="22" viewBox="0 0 24 22" ><path d="M5.8 8.2 A7.1 7.1 0 1 1 7.4 16.6" fill="none" stroke="#222" stroke-width="1.5" stroke-linecap="round"/><path d="M4.8 4 V9.3 H10.4" fill="none" stroke="#222" stroke-width="1.5" stroke-linecap="round" stroke-linejoin="round"/></svg>
<div id="t49" class="a" style="left:810.90px;top:573px;font-size:15px;line-height:17px;color:#333;transform:scaleX(1.0648);transform-origin:0 0;">History</div>
<div class="a" style="left:0px;top:324px;width:7px;height:66.5px;background:#f4f5f7;border-top:1px solid #e2e4ea;border-bottom:1px solid #9a9a9a;border-right:1px solid #c5cbd8"></div>
<svg style="left:1.5px;top:353.8px" width="3.5" height="6.8" viewBox="0 0 3.5 6.8" ><path d="M0 0 L3.5 3.4 L0 6.8 Z" fill="#c8cde0"/></svg>
<div class="a" style="left:756px;top:324px;width:5.5px;height:66.5px;background:#f4f5f7;border-top:1px solid #e2e4ea;border-bottom:1px solid #9a9a9a"></div>
<svg style="left:757.2px;top:353.8px" width="3.5" height="6.8" viewBox="0 0 3.5 6.8" ><path d="M0 0 L3.5 3.4 L0 6.8 Z" fill="#c8cde0"/></svg>
</body></html>
